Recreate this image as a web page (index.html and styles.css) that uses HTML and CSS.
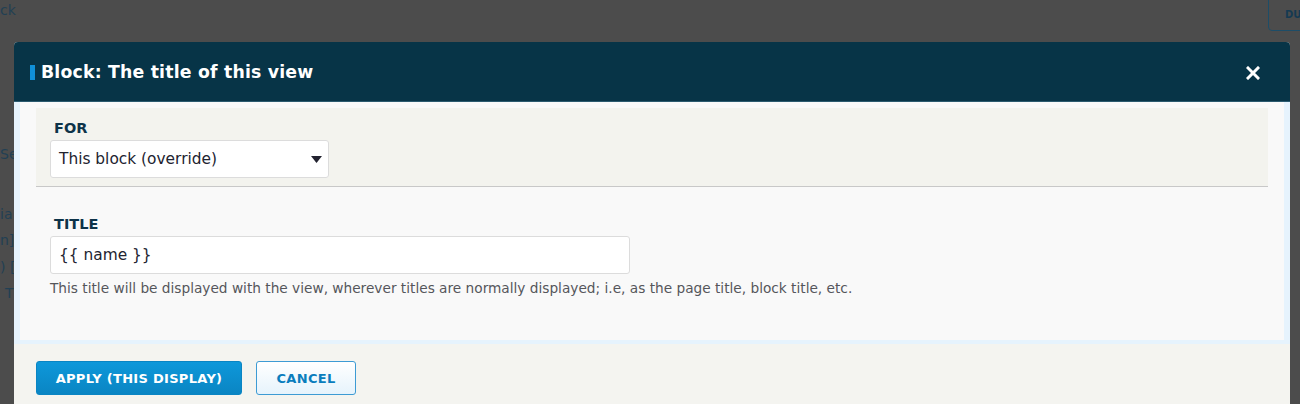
FILE: index.html
```html
<!DOCTYPE html>
<html>
<head>
<meta charset="utf-8">
<link rel="stylesheet" href="styles.css">
</head>
<body>
<div class="page">
  <div class="bg-text bt1">ck</div>
  <div class="bg-text bt2">Se</div>
  <div class="bg-text bt3">ia</div>
  <div class="bg-text bt4">n]</div>
  <div class="bg-text bt5">) [</div>
  <div class="bg-text bt6">T</div>
  <div class="bg-btn">DU</div>
</div>
<div class="dialog">
  <div class="dialog-header">
    <span class="marker"></span>
    <h1 class="dialog-title">Block: The title of this view</h1>
    <button class="close" aria-label="Close">
      <svg width="14" height="14" viewBox="0 0 14 14"><path d="M2 2 L12 12 M12 2 L2 12" stroke="#fff" stroke-width="3" stroke-linecap="square"/></svg>
    </button>
  </div>
  <div class="dialog-body">
    <div class="body-inner">
      <div class="fieldset-for">
        <label class="form-label">FOR</label>
        <div class="select">
          <span>This block (override)</span>
          <svg class="arrow" width="11" height="7" viewBox="0 0 11 7"><path d="M0 0 H11 L5.5 7 Z" fill="#222330"/></svg>
        </div>
      </div>
      <div class="field-title">
        <label class="form-label">TITLE</label>
        <div class="text-input">{{ name }}</div>
        <div class="description">This title will be displayed with the view, wherever titles are normally displayed; i.e, as the page title, block title, etc.</div>
      </div>
    </div>
  </div>
  <div class="buttonpane">
    <button class="btn btn-primary">APPLY (THIS DISPLAY)</button>
    <button class="btn btn-secondary">CANCEL</button>
  </div>
</div>
</body>
</html>
```
FILE: styles.css
```css
html, body {
  margin: 0;
  padding: 0;
  width: 1300px;
  height: 404px;
  overflow: hidden;
  background: #4c4c4c;
  font-family: "DejaVu Sans", sans-serif;
}
.page {
  position: absolute;
  inset: 0;
}
.bg-text {
  position: absolute;
  color: #1d3f55;
  font-size: 14px;
  opacity: 0.9;
}
.bt1 { left: 0; top: 2px; }
.bt2 { left: 0; top: 146px; }
.bt3 { left: 0; top: 206px; }
.bt4 { left: 0; top: 232px; }
.bt5 { left: 0; top: 259px; }
.bt6 { left: 5px; top: 285px; }
.bg-btn {
  position: absolute;
  left: 1268px;
  top: -4px;
  width: 60px;
  height: 35px;
  border: 1px solid #1d4d68;
  border-radius: 4px;
  box-sizing: border-box;
  color: #153a52;
  font-weight: bold;
  font-size: 10px;
  padding: 12px 0 0 16px;
}
.dialog {
  position: absolute;
  left: 14px;
  top: 42px;
  width: 1276px;
  height: 380px;
  border-radius: 4px 4px 0 0;
  overflow: hidden;
  background: #f4f4f0;
}
.dialog-header {
  height: 59px;
  background: #073447;
  border-bottom: 1px solid #2b5a6f;
  display: flex;
  align-items: center;
  padding: 0 16px;
  box-sizing: content-box;
}
.marker {
  width: 5px;
  height: 15px;
  background: #1090d8;
  margin-right: 6px;
  margin-top: 1px;
}
.dialog-title {
  margin: 0;
  flex: 1;
  color: #fff;
  font-size: 17.3px;
  font-weight: bold;
  letter-spacing: 0.2px;
}
.close {
  background: none;
  border: 0;
  padding: 0;
  width: 14px;
  height: 14px;
  margin-right: 14px;
  margin-top: 3px;
  display: flex;
}
.dialog-body {
  background: #e6f3fd;
  padding: 0 6px 4px 6px;
}
.body-inner {
  background: #f9f9f9;
  height: 232px;
  padding: 6px 16px 0 16px;
}
.fieldset-for {
  background: #f3f3ee;
  border-bottom: 1px solid #c8c8c8;
  padding: 12px 14px 9px 14px;
  height: 57px;
}
.form-label {
  display: block;
  color: #0d3349;
  font-weight: bold;
  font-size: 14.5px;
  line-height: 16px;
  margin-left: 4px;
  margin-bottom: 4px;
}
.select {
  width: 279px;
  height: 38px;
  box-sizing: border-box;
  background: #fff;
  border: 1px solid #dcdcdc;
  border-radius: 3px;
  display: flex;
  align-items: center;
  justify-content: space-between;
  padding: 0 6px 0 8px;
  color: #222330;
  font-size: 15.4px;
}
.arrow { margin-top: 1px; }
.field-title {
  padding: 29px 14px 0 14px;
}
.text-input {
  width: 580px;
  height: 38px;
  box-sizing: border-box;
  background: #fff;
  border: 1px solid #dcdcdc;
  border-radius: 3px;
  display: flex;
  align-items: center;
  padding: 0 8px;
  color: #222330;
  font-size: 15.4px;
}
.description {
  color: #55565b;
  font-size: 13.7px;
  margin-top: 6px;
}
.buttonpane {
  display: flex;
  gap: 14px;
  padding: 17px 22px;
}
.btn {
  height: 34px;
  border-radius: 3px;
  font-family: "DejaVu Sans", sans-serif;
  font-weight: bold;
  font-size: 13px;
  letter-spacing: 0.3px;
  box-sizing: border-box;
}
.btn-primary {
  width: 206px;
  background: linear-gradient(#0e98da, #0a85c3);
  border: 1px solid #0a85c3;
  color: #fff;
}
.btn-secondary {
  width: 100px;
  background: linear-gradient(#ffffff, #e6f3fc);
  border: 1px solid #3d9bd4;
  color: #0a7dbd;
}
```
